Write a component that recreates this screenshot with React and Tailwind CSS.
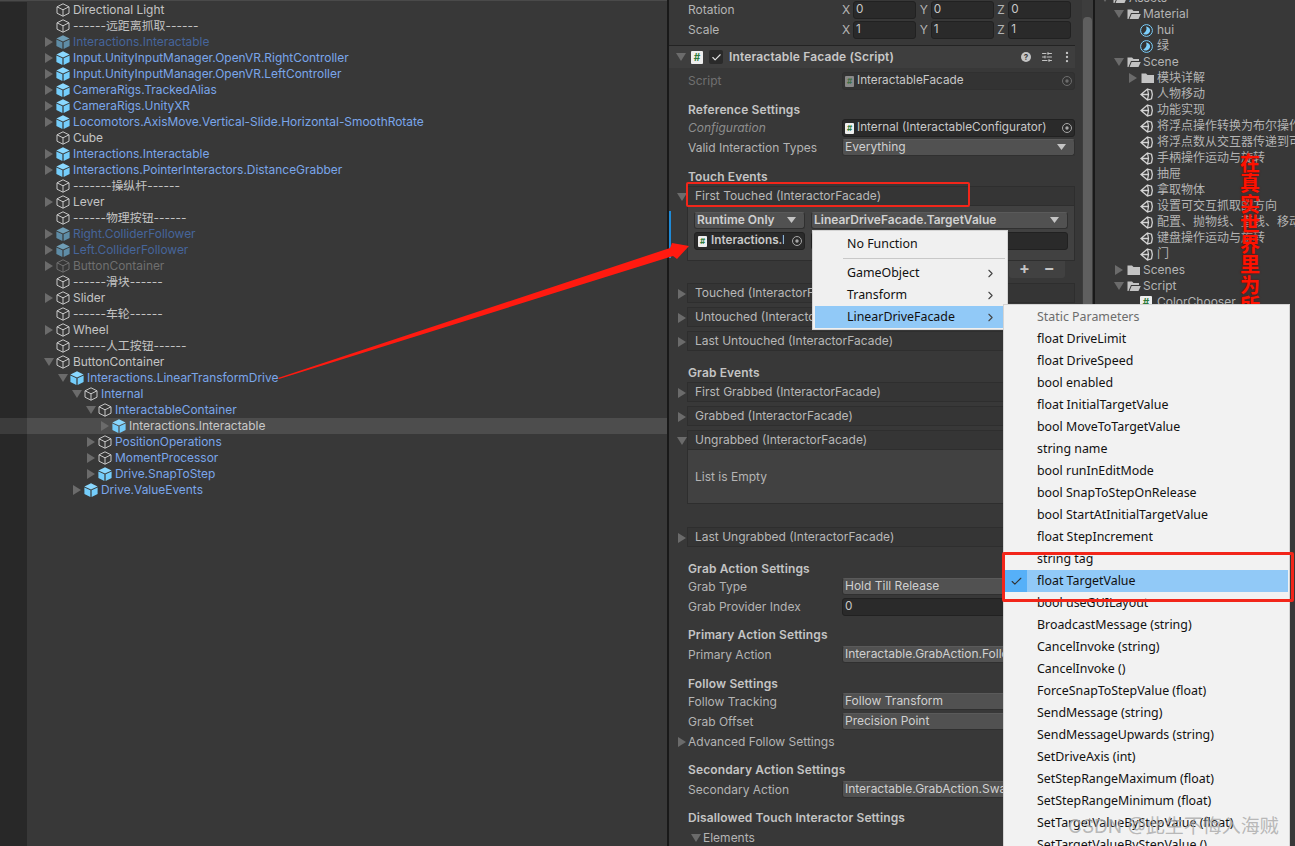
import React from "react";
import { Check, ChevronRight, EllipsisVertical, SlidersHorizontal } from "lucide-react";

const BLUE = "text-[#7aa6ea]";
const DIMBLUE = "text-[#46659b]";

const hierarchy = [
  { text: "Directional Light", icon: "go" },
  { text: "------远距离抓取------", icon: "go" },
  { text: "Interactions.Interactable", icon: "dim", arrow: "right", color: DIMBLUE },
  { text: "Input.UnityInputManager.OpenVR.RightController", icon: "prefab", arrow: "right", color: BLUE },
  { text: "Input.UnityInputManager.OpenVR.LeftController", icon: "prefab", arrow: "right", color: BLUE },
  { text: "CameraRigs.TrackedAlias", icon: "prefab", arrow: "right", color: BLUE },
  { text: "CameraRigs.UnityXR", icon: "prefab", arrow: "right", color: BLUE },
  { text: "Locomotors.AxisMove.Vertical-Slide.Horizontal-SmoothRotate", icon: "prefab", arrow: "right", color: BLUE },
  { text: "Cube", icon: "go" },
  { text: "Interactions.Interactable", icon: "prefab", arrow: "right", color: BLUE },
  { text: "Interactions.PointerInteractors.DistanceGrabber", icon: "prefab", arrow: "right", color: BLUE },
  { text: "-------操纵杆------", icon: "go" },
  { text: "Lever", icon: "go", arrow: "right" },
  { text: "------物理按钮------", icon: "go" },
  { text: "Right.ColliderFollower", icon: "dim", arrow: "right", color: DIMBLUE },
  { text: "Left.ColliderFollower", icon: "dim", arrow: "right", color: DIMBLUE },
  { text: "ButtonContainer", icon: "godim", arrow: "right", color: "text-[#6f6f6f]" },
  { text: "------滑块------", icon: "go" },
  { text: "Slider", icon: "go", arrow: "right" },
  { text: "------车轮------", icon: "go" },
  { text: "Wheel", icon: "go", arrow: "right" },
  { text: "------人工按钮------", icon: "go" },
  { text: "ButtonContainer", icon: "go", arrow: "down" },
  { text: "Interactions.LinearTransformDrive", icon: "prefab", arrow: "down", color: BLUE, depth: 1 },
  { text: "Internal", icon: "go", arrow: "down", color: BLUE, depth: 2 },
  { text: "InteractableContainer", icon: "go", arrow: "down", color: BLUE, depth: 3 },
  { text: "Interactions.Interactable", icon: "prefab", arrow: "right", depth: 4, selected: true },
  { text: "PositionOperations", icon: "go", arrow: "right", color: BLUE, depth: 3 },
  { text: "MomentProcessor", icon: "go", arrow: "right", color: BLUE, depth: 3 },
  { text: "Drive.SnapToStep", icon: "prefab", arrow: "right", color: BLUE, depth: 3 },
  { text: "Drive.ValueEvents", icon: "prefab", arrow: "right", color: BLUE, depth: 2 },
];

const scenes = ["人物移动", "功能实现", "将浮点操作转换为布尔操作", "将浮点数从交互器传递到可", "手柄操作运动与旋转", "抽屉", "拿取物体", "设置可交互抓取的方向", "配置、抛物线、直线、移动", "键盘操作运动与旋转", "门"];

const staticParams = ["float DriveLimit", "float DriveSpeed", "bool enabled", "float InitialTargetValue", "bool MoveToTargetValue", "string name", "bool runInEditMode", "bool SnapToStepOnRelease", "bool StartAtInitialTargetValue", "float StepIncrement", "string tag"];
const moreParams = ["bool useGUILayout", "BroadcastMessage (string)", "CancelInvoke (string)", "CancelInvoke ()", "ForceSnapToStepValue (float)", "SendMessage (string)", "SendMessageUpwards (string)", "SetDriveAxis (int)", "SetStepRangeMaximum (float)", "SetStepRangeMinimum (float)", "SetTargetValueByStepValue (float)", "SetTargetValueByStepValue ()"];

function Tri({ dir = "right", className = "" }) {
  return (
    <svg width="10" height="10" viewBox="0 0 10 10" className={"shrink-0 " + className}>
      {dir === "right" ? <polygon points="1,0 9,5 1,10" fill="#6b6b6b" /> : <polygon points="0,1 10,1 5,9" fill="#6b6b6b" />}
    </svg>
  );
}

function GoIcon({ color = "#c8c8c8" }) {
  return (
    <svg width="14" height="14" viewBox="0 0 14 14" fill="none" stroke={color} strokeWidth="1" className="shrink-0">
      <path d="M7 .8 L13 3.8 V10.2 L7 13.2 L1 10.2 V3.8 Z M1 3.8 L7 6.8 L13 3.8 M7 6.8 V13.2" />
    </svg>
  );
}

function PrefabIcon({ dim }) {
  return (
    <svg width="14" height="14" viewBox="0 0 14 14" className="shrink-0">
      <polygon points="7,0.2 13.6,3.4 7,6.4 .4,3.4" fill={dim ? "#6f9db5" : "#8ad8ff"} />
      <polygon points=".4,4.4 6.4,7.3 6.4,14 .4,11" fill={dim ? "#5e8ca6" : "#74cdfb"} />
      <polygon points="13.6,4.4 7.6,7.3 7.6,14 13.6,11" fill={dim ? "#5e8ca6" : "#74cdfb"} />
    </svg>
  );
}

function HierarchyRow({ row }) {
  const depth = row.depth || 0;
  return (
    <div className={"flex h-4 items-center " + (row.selected ? "ml-[-27px] border-l-[27px] border-[#3c3c3c] bg-[#4d4d4d] text-[#c8c8c8]" : "")} style={{ paddingLeft: 17 + depth * 14 }}>
      <div className="flex w-3 shrink-0 items-center">{row.arrow && <Tri dir={row.arrow} />}</div>
      {row.icon === "prefab" && <PrefabIcon />}
      {row.icon === "dim" && <PrefabIcon dim />}
      {row.icon === "go" && <GoIcon />}
      {row.icon === "godim" && <GoIcon color="#6f6f6f" />}
      <span className={"ml-[3px] whitespace-nowrap " + (row.color || "")}>{row.text}</span>
    </div>
  );
}

function Target({ className = "" }) {
  return (
    <svg width="12" height="12" viewBox="0 0 12 12" fill="none" className={"shrink-0 " + className}>
      <circle cx="6" cy="6" r="4.5" stroke="#a8a8a8" />
      <circle cx="6" cy="6" r="1.7" fill="#a8a8a8" />
    </svg>
  );
}

function ScriptIcon({ dim, small }) {
  const size = small ? "h-[11px] w-[9px] text-[8px]" : "h-[13px] w-[12px] text-[10px]";
  return (
    <span className={"flex shrink-0 items-center justify-center rounded-[1px] leading-none font-bold " + size + " " + (dim ? "bg-[#8a8a8a] text-[#3f6e46]" : "bg-[#eeeeee] text-[#2c7a3a]")}>#</span>
  );
}

function Dropdown({ children, bold }) {
  return (
    <div className={"flex h-[17px] min-w-0 flex-1 items-center rounded-[3px] border border-[#303030] border-t-[#5a5a5a] bg-[#515151] pr-2 pb-px pl-[2px] whitespace-nowrap text-[#d0d0d0] " + (bold ? "font-semibold" : "")}>
      <span className="min-w-0 flex-1 overflow-hidden">{children}</span>
      <svg width="9" height="6" viewBox="0 0 9 6" className="shrink-0"><polygon points="0,0 9,0 4.5,6" fill="#c4c4c4" /></svg>
    </div>
  );
}

function Field({ children, className = "" }) {
  return (
    <div className={"flex h-[18px] items-center rounded-[3px] border border-[#212121] bg-[#2a2a2a] pl-[2px] text-[11.75px] whitespace-nowrap text-[#c8c8c8] " + className}>{children}</div>
  );
}

function PropRow({ label, className = "", labelClass = "", children }) {
  return (
    <div className={"flex h-[18px] items-center " + className}>
      <span className={"w-[154px] shrink-0 whitespace-nowrap " + (labelClass || "text-[#b4b4b4]")}>{label}</span>
      <div className="flex min-w-0 flex-1 self-start">{children}</div>
    </div>
  );
}

function Heading({ children, className = "" }) {
  return <div className={"flex h-[18px] items-center font-semibold tracking-[0.13px] whitespace-nowrap text-[#c4c4c4] " + className}>{children}</div>;
}

function EventBar({ children, className = "", open }) {
  return (
    <div className={"relative ml-[-1px] flex h-5 items-center border border-[#2e2e2e] bg-[#353535] pl-[7px] whitespace-nowrap text-[#b8b8b8] " + className}>
      <Tri dir={open ? "down" : "right"} className="absolute left-[-11px] top-[5px]" />
      {children}
    </div>
  );
}

function Vector({ label, values, className = "" }) {
  return (
    <div className={"flex h-5 items-center text-[#b4b4b4] " + className}>
      <span className="w-[154px] shrink-0">{label}</span>
      {["X", "Y", "Z"].map((axis, i) => (
        <div key={axis} className="flex w-[79.5px] items-center">
          <span className="w-[11px] shrink-0 text-[#b4b4b4]">{axis}</span>
          <Field className="w-[63px]">{values[i]}</Field>
        </div>
      ))}
    </div>
  );
}

function Inspector() {
  return (
    <div className="relative flex h-full w-[424px] shrink-0 bg-[#383838] text-xs">
      <div className="w-[413px] shrink-0 overflow-hidden pr-[7px]">
        <div className="pl-[19px]">
          <Vector label="Rotation" values={[0, 0, 0]} />
          <Vector label="Scale" values={[1, 1, 1]} />
        </div>
        <div className="mt-[5px] flex h-[23px] items-center border-t border-[#232323] bg-[#3e3e3e] pl-[7px] pr-0">
          <Tri dir="down" />
          <span className="ml-[5px]"><ScriptIcon /></span>
          <span className="ml-[6px] flex h-[14px] w-[14px] items-center justify-center rounded-[2px] bg-[#2a2a2a] text-[#e0e0e0]"><Check size={11} strokeWidth={2.5} /></span>
          <span className="ml-[6px] flex-1 font-semibold tracking-[0.14px] whitespace-nowrap text-[#c8c8c8]">Interactable Facade (Script)</span>
          <span className="flex h-[10px] w-[10px] items-center justify-center rounded-full bg-[#c4c4c4] text-[8px] leading-none font-bold text-[#383838]">?</span>
          <SlidersHorizontal size={12} className="ml-[10px] text-[#c4c4c4]" />
          <EllipsisVertical size={14} className="ml-[7px] mr-[1px] text-[#c4c4c4]" />
        </div>
        <div className="pl-[19px]">
          <PropRow label="Script" className="mt-[4px]" labelClass="text-[#707070]">
            <Field className="w-full gap-[3px] border-[#303030] bg-[#333333] text-[#707070]">
              <ScriptIcon dim small /><span className="flex-1">InteractableFacade</span><Target className="mr-[1px] opacity-50" />
            </Field>
          </PropRow>
          <Heading className="mt-[11px]">Reference Settings</Heading>
          <PropRow label="Configuration" labelClass="italic text-[#8e8e8e]">
            <Field className="w-full gap-[3px]">
              <ScriptIcon small /><span className="flex-1">Internal (InteractableConfigurator)</span><Target className="mr-[1px]" />
            </Field>
          </PropRow>
          <PropRow label="Valid Interaction Types" className="mt-[2px]"><Dropdown>Everything</Dropdown></PropRow>
          <Heading className="mt-[11px]">Touch Events</Heading>

          <div className="relative">
            <EventBar open>First Touched (InteractorFacade)</EventBar>
            <div className="absolute left-[-19px] top-[25px] h-[47px] w-[2px] bg-[#1f8ad6]" />
            <div className="ml-[-1px] h-[55px] border-x border-b border-[#2e2e2e] bg-[#414141] px-[6px] pt-[6px]">
              <div className="flex h-[19px] gap-[6px]">
                <div className="flex w-[111px]"><Dropdown bold>Runtime Only</Dropdown></div>
                <Dropdown bold>LinearDriveFacade.TargetValue</Dropdown>
              </div>
              <div className="mt-[1px] flex gap-[6px]">
                <Field className="w-[111px] gap-[4px] overflow-hidden pl-[3px] font-semibold">
                  <ScriptIcon small /><span className="w-[73px] shrink-0 overflow-hidden">Interactions.LinearDrive</span><Target className="ml-[3px]" />
                </Field>
                <Field className="flex-1" />
              </div>
            </div>
            <div className="ml-auto mr-[10px] flex h-[17px] w-[56px] items-center gap-[14px] rounded-b-[3px] bg-[#414141] pb-[3px] pl-[10px] text-base leading-none font-bold text-[#c4c4c4]">
              <span>+</span><span>−</span>
            </div>
          </div>

          <EventBar className="mt-[5px]">Touched (InteractorFacade)</EventBar>
          <EventBar className="mt-1">Untouched (InteractorFacade)</EventBar>
          <EventBar className="mt-1">Last Untouched (InteractorFacade)</EventBar>
          <Heading className="mt-[13px]">Grab Events</Heading>
          <EventBar>First Grabbed (InteractorFacade)</EventBar>
          <EventBar className="mt-1">Grabbed (InteractorFacade)</EventBar>
          <EventBar className="mt-1" open>Ungrabbed (InteractorFacade)</EventBar>
          <div className="ml-[-1px] flex h-[54px] items-center border-x border-b border-[#2e2e2e] bg-[#414141] pl-[7px] text-[#b4b4b4]">List is Empty</div>
          <EventBar className="mt-[23px]">Last Ungrabbed (InteractorFacade)</EventBar>
          <Heading className="mt-[13px]">Grab Action Settings</Heading>
          <PropRow label="Grab Type"><Dropdown>Hold Till Release</Dropdown></PropRow>
          <PropRow label="Grab Provider Index" className="mt-[2px]"><Field className="w-full">0</Field></PropRow>
          <Heading className="mt-[10px]">Primary Action Settings</Heading>
          <PropRow label="Primary Action" className="mt-[2px]"><Dropdown>Interactable.GrabAction.FollowAndControlDirection</Dropdown></PropRow>
          <Heading className="mt-[11px]">Follow Settings</Heading>
          <PropRow label="Follow Tracking"><Dropdown>Follow Transform</Dropdown></PropRow>
          <PropRow label="Grab Offset" className="mt-[2px]"><Dropdown>Precision Point</Dropdown></PropRow>
          <div className="relative mt-[2px] flex h-[18px] items-center whitespace-nowrap text-[#b4b4b4]">
            <Tri className="absolute left-[-11px] top-[4px]" />Advanced Follow Settings
          </div>
          <Heading className="mt-[10px]">Secondary Action Settings</Heading>
          <PropRow label="Secondary Action" className="mt-[2px]"><Dropdown>Interactable.GrabAction.SwapAction</Dropdown></PropRow>
          <Heading className="mt-[10px]">Disallowed Touch Interactor Settings</Heading>
          <div className="mt-[2px] flex h-[18px] items-center gap-[2px] pl-[3px] text-[#b4b4b4]"><Tri dir="down" />Elements</div>
        </div>
      </div>
      <div className="w-[11px] shrink-0 bg-[#3d3d3d] px-[1px] pt-[17px]">
        <div className="h-[600px] rounded-[4px] bg-[#5f5f5f]" />
      </div>
    </div>
  );
}

function Folder({ open }) {
  return (
    <svg width="14" height="12" viewBox="0 0 14 12" className="shrink-0">
      {open ? (
        <path d="M0.5 1.5 H5 L6.5 3 H12 V5 H4 L1.5 11 H0.5 Z M4.6 6 H13.8 L11.5 11 H2.6 Z" fill="#c4c4c4" />
      ) : (
        <path d="M0.5 1.5 H5 L6.5 3 H13 V11 H0.5 Z" fill="#c4c4c4" />
      )}
    </svg>
  );
}

function SceneIcon() {
  return (
    <svg width="13" height="13" viewBox="0 0 13 13" fill="none" stroke="#d4d4d4" strokeWidth="1.3" className="shrink-0">
      <path d="M7.5 1 L11.5 2.2 L12.3 6.5 L11.5 10.8 L7.5 12 L1 6.5 Z M1 6.5 H8.5 M8.5 6.5 L7.5 1 M8.5 6.5 L7.5 12" />
    </svg>
  );
}

function MatIcon() {
  return (
    <svg width="13" height="13" viewBox="0 0 13 13" className="shrink-0">
      <circle cx="6.5" cy="6.5" r="5.9" fill="#333" stroke="#7ccffb" />
      <path d="M6 2.6 A4 4 0 1 1 3.2 9.4 A5 5 0 0 0 6 2.6 Z" fill="#7ccffb" />
    </svg>
  );
}

function ProjectRow({ arrow, icon, children, pad, className = "" }) {
  const pads = { 0: "pl-[5px]", 1: "pl-[19px]", 2: "pl-[33px]", 3: "pl-[45px]" };
  return (
    <div className={"flex h-4 items-center whitespace-nowrap text-[#b4b4b4] " + pads[pad] + " " + className}>
      {arrow && <Tri dir={arrow} className="mr-[3px]" />}
      {icon}
      <span className="ml-[2px]">{children}</span>
    </div>
  );
}

function ProjectPanel() {
  return (
    <div className="h-full flex-1 overflow-hidden bg-[#383838] pt-0 text-xs">
      <ProjectRow arrow="down" icon={<Folder open />} pad={0} className="mt-[-10px]">Assets</ProjectRow>
      <ProjectRow arrow="down" icon={<Folder open />} pad={1}>Material</ProjectRow>
      <ProjectRow icon={<MatIcon />} pad={3}><span className="ml-[2px]">hui</span></ProjectRow>
      <ProjectRow icon={<MatIcon />} pad={3}><span className="ml-[2px]">绿</span></ProjectRow>
      <ProjectRow arrow="down" icon={<Folder open />} pad={1}>Scene</ProjectRow>
      <ProjectRow arrow="right" icon={<Folder />} pad={2}>模块详解</ProjectRow>
      {scenes.map((name) => (
        <ProjectRow key={name} icon={<SceneIcon />} pad={3}><span className="ml-[2px]">{name}</span></ProjectRow>
      ))}
      <ProjectRow arrow="right" icon={<Folder />} pad={1}>Scenes</ProjectRow>
      <ProjectRow arrow="down" icon={<Folder open />} pad={1}>Script</ProjectRow>
      <ProjectRow icon={<ScriptIcon />} pad={3}><span className="ml-[3px]">ColorChooser</span></ProjectRow>
    </div>
  );
}

function FunctionMenu() {
  const items = ["GameObject", "Transform", "LinearDriveFacade"];
  return (
    <div className="absolute left-[812px] top-[230px] h-[100px] w-[196px] border border-[#d4d4d4] bg-[#f0f0f0] px-[2px] pt-[2px] font-['Noto_Sans','Noto_Sans_CJK_SC',sans-serif] text-[12.4px] text-[#111111]">
      <div className="flex h-[22px] items-center pl-8">No Function</div>
      <div className="ml-[28px] mr-[0px] mt-[3px] mb-[3px] h-px bg-[#c8c8c8]" />
      {items.map((item) => (
        <div key={item} className={"flex h-[22px] items-center justify-between pl-8 pr-2 " + (item === "LinearDriveFacade" ? "bg-[#91c9f7]" : "")}>
          {item}<ChevronRight size={13} className="text-[#444444]" />
        </div>
      ))}
    </div>
  );
}

function ParamRow({ children }) {
  return <div className="flex h-[22px] items-center pl-8 whitespace-nowrap">{children}</div>;
}

function ParamMenu() {
  return (
    <div className="absolute left-[1003px] top-[304px] flex h-[560px] w-[287px] flex-col border border-[#d4d4d4] bg-[#f2f2f2] px-[1px] pt-[1px] font-['Noto_Sans','Noto_Sans_CJK_SC',sans-serif] text-[12.4px] text-[#111111]">
      <ParamRow><span className="text-[#6d6d6d]">Static Parameters</span></ParamRow>
      {staticParams.map((p) => <ParamRow key={p}>{p}</ParamRow>)}
      <div className="flex h-[22px] shrink-0 items-center bg-[#91c9f7]">
        <span className="flex h-full w-[22px] items-center justify-center bg-[#56b0f8]"><Check size={13} className="text-[#333333]" /></span>
        <span className="ml-[10px]">float TargetValue</span>
      </div>
      {moreParams.map((p) => <ParamRow key={p}>{p}</ParamRow>)}
    </div>
  );
}

export default function App() {
  return (
    <div className="relative flex h-[846px] w-[1295px] overflow-hidden bg-[#191919] font-[Inter,'Noto_Sans_CJK_SC',sans-serif]">
      <div className="flex h-full w-[667px] shrink-0 border-t border-[#4a4a4a] bg-[#383838] pt-[1px] text-[11.93px] text-[#c4c4c4]">
        <div className="w-full border-l-[27px] border-[#282828]">
          {hierarchy.map((row, i) => <HierarchyRow key={i} row={row} />)}
        </div>
      </div>
      <div className="w-[2px] shrink-0" />
      <Inspector />
      <div className="w-[2px] shrink-0" />
      <ProjectPanel />

      {/* annotations laid over the editor */}
      <div className="absolute left-[1240px] top-[154px] w-5 text-[20px] leading-[20.3px] font-bold text-[#ff1200] [text-shadow:0_0_2px_#7a0000]">在真实世界里为所</div>
      <FunctionMenu />
      <ParamMenu />
      <svg width="1295" height="846" className="pointer-events-none absolute left-0 top-0">
        <polygon points="278,378 670,248 672,243 689,246 677,259 673,256 279,379" fill="#ff1a10" />
      </svg>
      <div className="absolute left-[686px] top-[182px] h-[25px] w-[284px] rounded-[2px] border-[2px] border-[#f2261a]" />
      <div className="absolute left-[1002px] top-[552px] h-[50px] w-[292px] rounded-[2px] border-[3px] border-[#f2261a]" />
      <div className="absolute left-[1068px] top-[813px] text-[19px] whitespace-nowrap text-[#a8a8a8]/80">CSDN @此生不悔入海贼</div>
    </div>
  );
}
